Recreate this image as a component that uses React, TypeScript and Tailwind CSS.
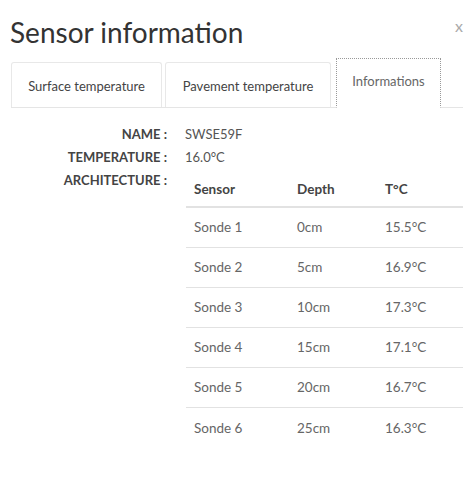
import React from 'react';

/* =======================
   DATA
======================= */
const tabs = [
  { label: 'Surface temperature', active: false, width: 'w-[151px]' },
  { label: 'Pavement temperature', active: false, width: 'w-[166px]' },
  { label: 'Informations', active: true, width: 'w-[105px]' },
];

const probes = [
  { sensor: 'Sonde 1', depth: '0cm', temp: '15.5°C' },
  { sensor: 'Sonde 2', depth: '5cm', temp: '16.9°C' },
  { sensor: 'Sonde 3', depth: '10cm', temp: '17.3°C' },
  { sensor: 'Sonde 4', depth: '15cm', temp: '17.1°C' },
  { sensor: 'Sonde 5', depth: '20cm', temp: '16.7°C' },
  { sensor: 'Sonde 6', depth: '25cm', temp: '16.3°C' },
];

/* =======================
   APP
======================= */
export default function App() {
  return (
    <div className="w-[474px] h-[480px] bg-white overflow-hidden text-[#555] font-['Lato',sans-serif]">
      {/* HEADER */}
      <div className="flex items-start justify-between pl-[10px] pr-[11px] pt-[12px]">
        <h1 className="text-[28px] leading-[40px] text-[#333]">Sensor information</h1>
        <span className="text-[16px] text-[#aaa] mt-[2px]">x</span>
      </div>

      {/* TABS */}
      <div className="flex items-end gap-[3px] mx-[11px] mt-[6px] border-b border-[#e5e5e5] h-[50px]">
        {tabs.map((t) =>
          t.active ? (
            <div
              key={t.label}
              className={`${t.width} h-[50px] -mb-px ml-[2px] bg-white border border-dotted border-[#999] border-b-white flex justify-center pt-[13px] text-[13px] text-[#666]`}
            >
              {t.label}
            </div>
          ) : (
            <div
              key={t.label}
              className={`${t.width} h-[45px] border border-[#e8e8e8] border-b-0 rounded-t-[3px] flex items-center justify-center pt-[4px] text-[13px] text-[#444]`}
            >
              {t.label}
            </div>
          )
        )}
      </div>

      {/* INFO */}
      <div className="grid grid-cols-[167px_1fr] gap-x-[8px] mt-[15px] text-[13px] pr-[11px]">
        <div className="text-right font-bold text-[#444] leading-[23px]">NAME :</div>
        <div className="pl-[10px] leading-[23px]">SWSE59F</div>
        <div className="text-right font-bold text-[#444] leading-[23px]">TEMPERATURE :</div>
        <div className="pl-[10px] leading-[23px]">16.0°C</div>
        <div className="text-right font-bold text-[#444] leading-[23px]">ARCHITECTURE :</div>
        <div className="pl-[10px] leading-[23px]" />
      </div>

      {/* TABLE */}
      <div className="ml-[186px] mr-[11px] -mt-[20px] text-[13.5px]">
        <div className="grid grid-cols-[103px_88px_1fr] px-[8px] h-[36px] items-center font-bold text-[#444] border-b-2 border-[#e2e2e2]">
          <span>Sensor</span>
          <span>Depth</span>
          <span>T°C</span>
        </div>
        {probes.map((p, i) => (
          <div
            key={p.sensor}
            className={`grid grid-cols-[103px_88px_1fr] px-[8px] h-[40px] items-center text-[#666] ${
              i < probes.length - 1 ? 'border-b border-[#e2e2e2]' : ''
            }`}
          >
            <span>{p.sensor}</span>
            <span>{p.depth}</span>
            <span>{p.temp}</span>
          </div>
        ))}
      </div>
    </div>
  );
}
